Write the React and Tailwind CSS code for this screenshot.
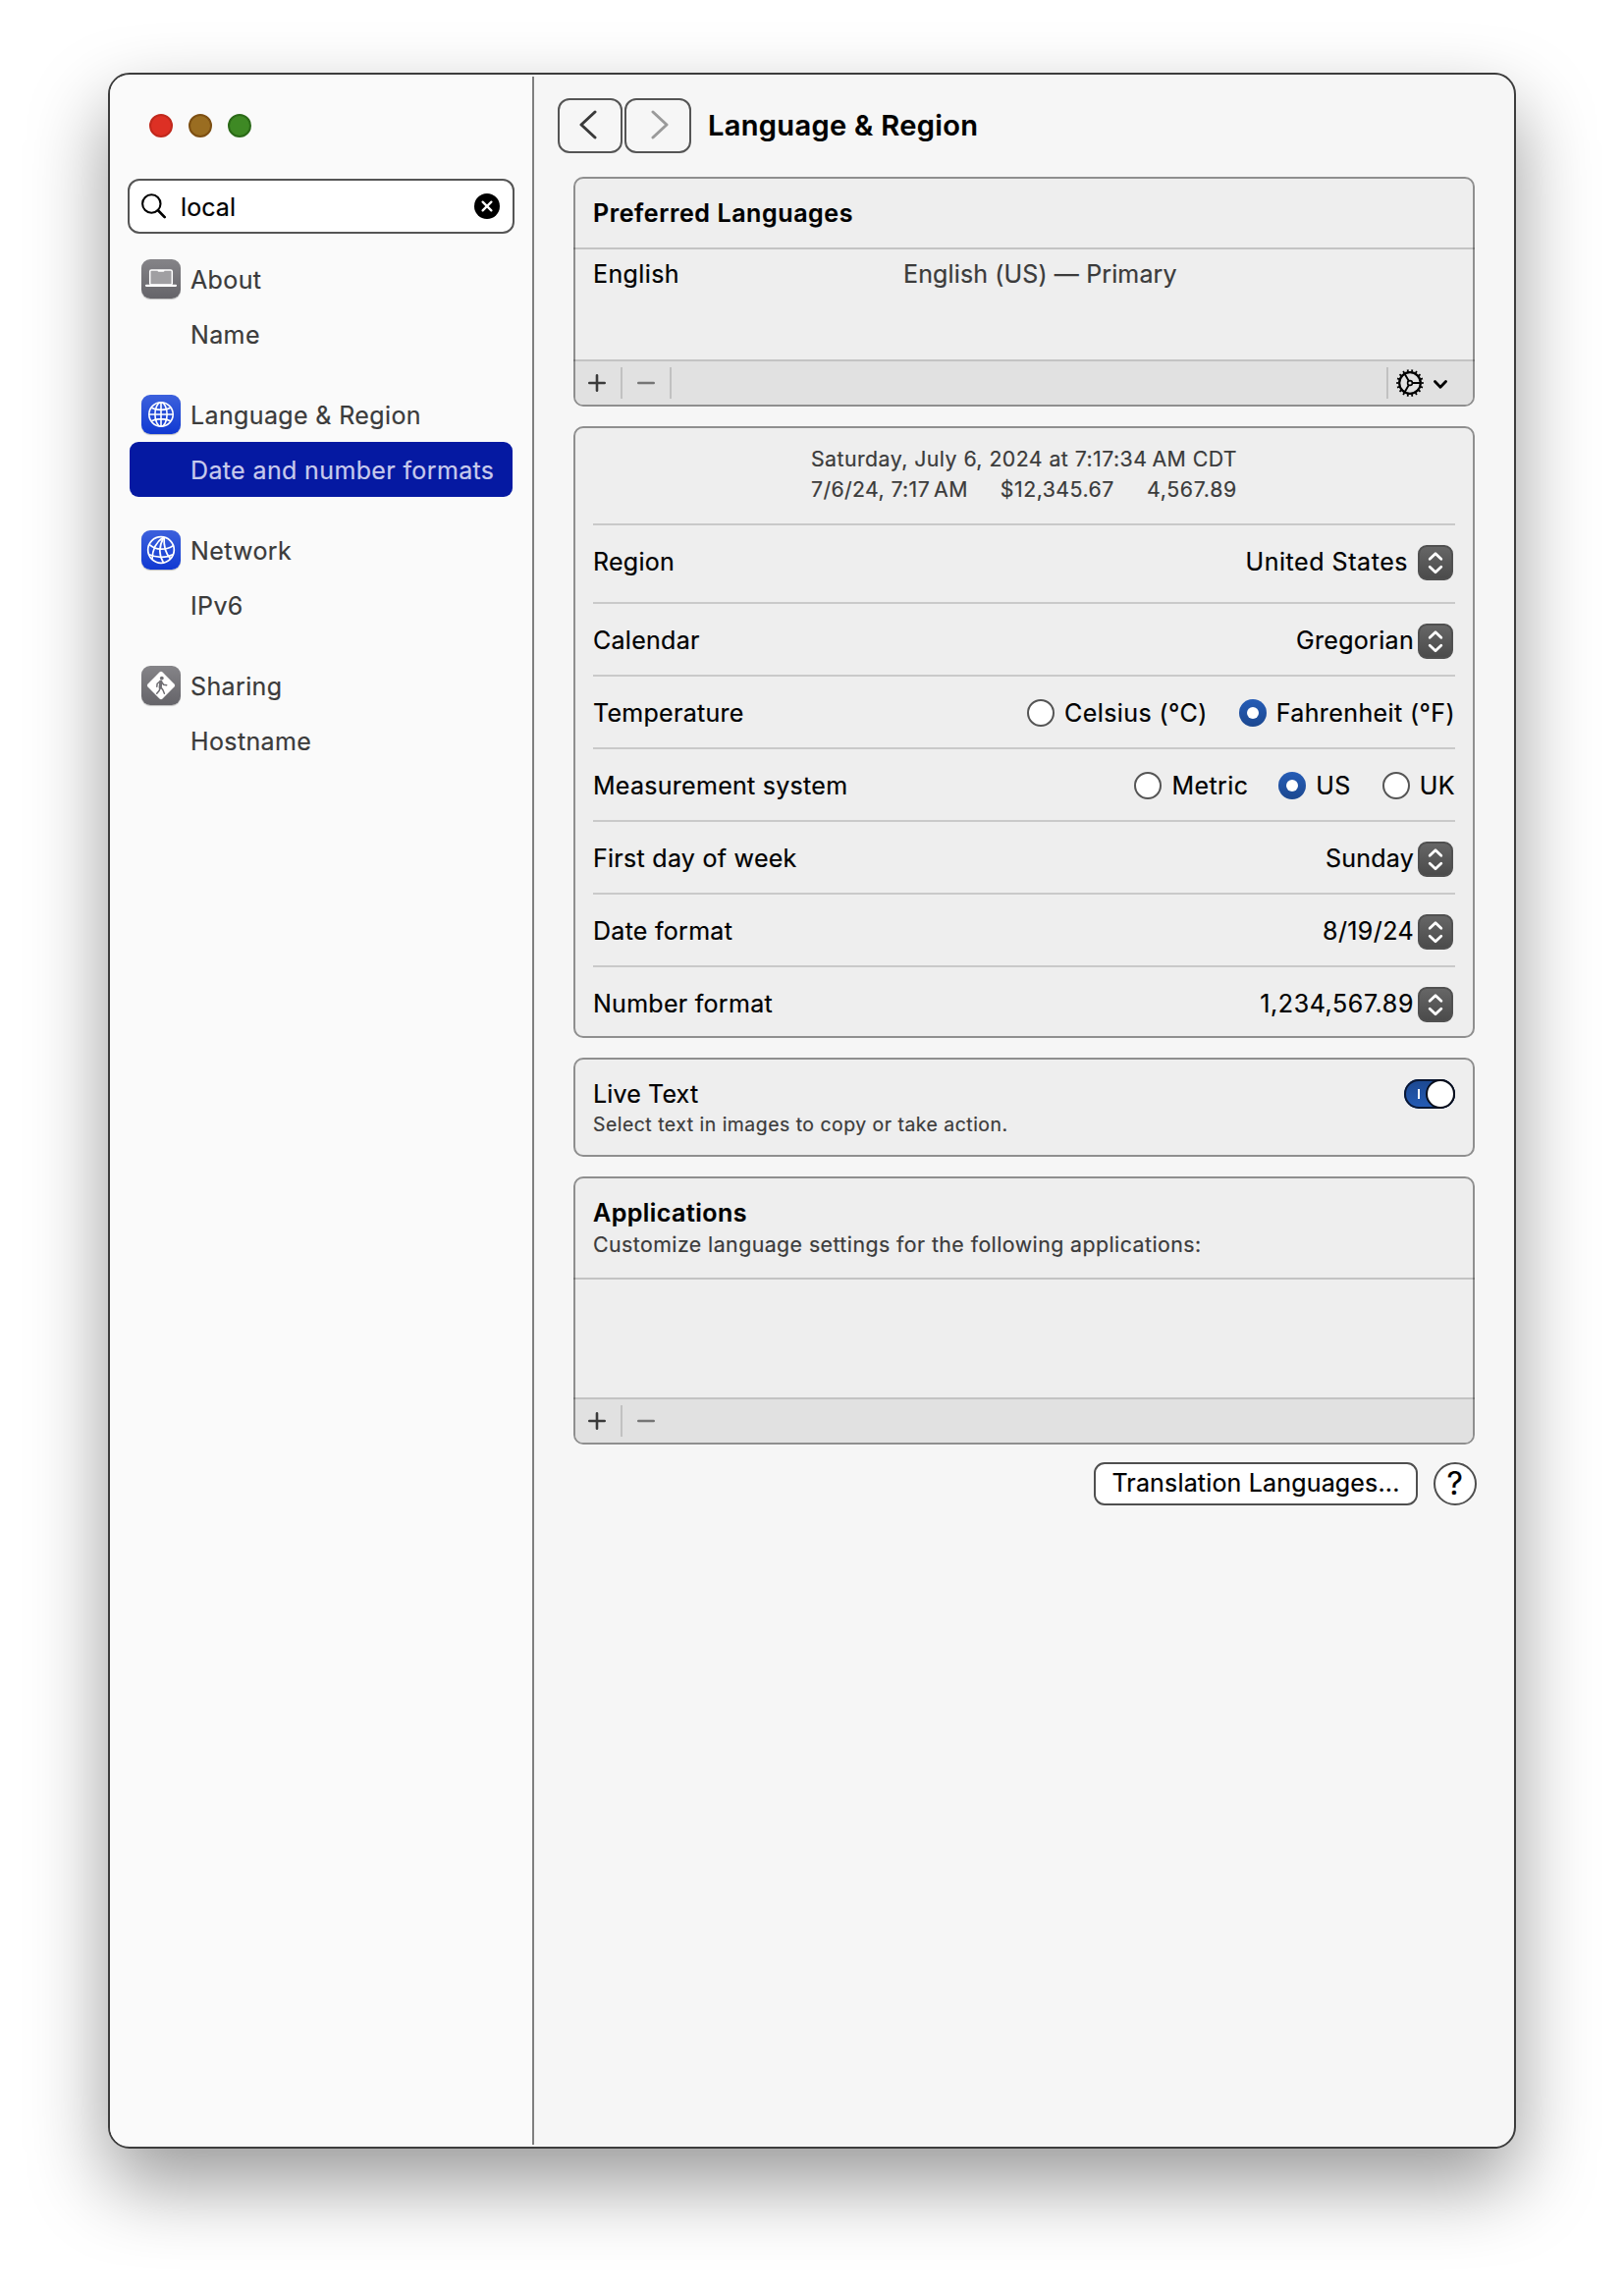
import clsx from 'clsx';

// Sidebar icons, all drawn on a 40x40 tile
const LaptopGlyph = () => (
  <svg viewBox="0 0 40 40" className="size-10" fill="none">
    <rect x="8.7" y="11" width="22.6" height="15" rx="1.6" fill="#a09fa2" stroke="white" strokeWidth="1.5" />
    <path d="M16.5 11h7v.6a1.2 1.2 0 0 1-1.2 1.2h-4.6a1.2 1.2 0 0 1-1.2-1.2z" fill="white" />
    <path d="M5 26.8h30" stroke="white" strokeWidth="2.2" strokeLinecap="round" />
  </svg>
);

const GlobeGlyph = () => (
  <svg viewBox="0 0 40 40" className="size-10" fill="none" stroke="white" strokeWidth="1.6">
    <circle cx="20" cy="20" r="12.2" />
    <ellipse cx="20" cy="20" rx="6.1" ry="12.2" />
    <path d="M20 7.8v24.4M7.8 20h24.4M10.2 13.2c5.6 2.9 14 2.9 19.6 0M10.2 26.8c5.6-2.9 14-2.9 19.6 0" />
  </svg>
);

const NetworkGlyph = () => (
  <svg viewBox="0 0 40 40" className="size-10" fill="none" stroke="white" strokeWidth="1.7">
    <circle cx="20" cy="20" r="13.3" />
    <path d="M22.5 7C15.5 11.5 11.2 19.5 11 29.6" />
    <path d="M22.8 7C18.2 15.5 17.5 25 22.5 33" />
    <path d="M23.2 7C22.6 15.5 24 23 29.6 28.8" />
    <path d="M8.3 14.6C14.5 20.5 25.5 20.6 32.3 15.6" />
    <path d="M7.4 24.6C15 28.3 25.5 28.2 32.6 24.4" />
  </svg>
);

const WalkGlyph = () => (
  <svg viewBox="0 0 40 40" className="size-10" fill="none">
    <rect x="9.4" y="9.4" width="21.2" height="21.2" rx="2.2" fill="white" transform="rotate(45 20 20)" />
    <circle cx="20.8" cy="12.6" r="1.9" fill="#6f6e73" />
    <path d="M19.8 16.2l-.6 6" stroke="#6f6e73" strokeWidth="3.2" strokeLinecap="round" />
    <path d="M18.8 16l-2.7 2.3-.3 3M21 17l1.7 2.2 3 .5M19 22.5l-.8 2.7-2.5 3M20 22l2 2.7 1.4 3.5" stroke="#6f6e73" strokeWidth="1.5" strokeLinecap="round" strokeLinejoin="round" />
  </svg>
);

const GearIcon = () => (
  <svg viewBox="0 0 28 28" className="size-7" fill="none" stroke="black">
    <circle cx="14" cy="14" r="10.8" strokeWidth="2.2" />
    <circle cx="14" cy="14" r="12.6" strokeWidth="2.4" pathLength="72" strokeDasharray="1.6 2.4" strokeDashoffset="0.8" />
    <circle cx="14" cy="14" r="2.4" strokeWidth="1.6" />
    <path d="M16.5 14H24M12.7 11.8L8.8 5M12.7 16.2L8.8 23" strokeWidth="1.9" />
  </svg>
);

const sections = [
  { title: 'About', item: 'Name', tile: 'from-[#858488] to-[#656469]', Glyph: LaptopGlyph },
  { title: 'Language & Region', item: 'Date and number formats', tile: 'from-[#3c60dc] to-[#1038d2]', Glyph: GlobeGlyph, selected: true },
  { title: 'Network', item: 'IPv6', tile: 'from-[#3c60dc] to-[#1038d2]', Glyph: NetworkGlyph },
  { title: 'Sharing', item: 'Hostname', tile: 'from-[#858488] to-[#656469]', Glyph: WalkGlyph },
];

const Sidebar = () => (
  <aside className="my-0.5 w-[432px] shrink-0 border-r-2 border-[#7f7f7f] bg-[#fafafa] px-[18px]">
    {/* Window buttons */}
    <div className="flex gap-4 pl-[22px] pt-[38px]">
      <span className="size-6 rounded-full border-2 border-[#c1281c] bg-[#dd3024]" />
      <span className="size-6 rounded-full border-2 border-[#7d4f12] bg-[#9a6d21]" />
      <span className="size-6 rounded-full border-2 border-[#2b6a18] bg-[#3e8924]" />
    </div>

    {/* Search */}
    <div className="mt-[42px] flex h-14 items-center rounded-[12px] border-2 border-[#555] bg-white pl-3 pr-[13px]">
      <svg viewBox="0 0 26 26" className="size-[26px]" fill="none" stroke="black" strokeLinecap="round">
        <circle cx="10.3" cy="10.5" r="9.2" strokeWidth="2.1" />
        <path d="M17 17.2l6.7 6.9" strokeWidth="2.7" />
      </svg>
      <span className="ml-[14px] mt-1 flex-1 tracking-[0.1px]">local</span>
      <svg viewBox="0 0 26 26" className="size-[26px]">
        <circle cx="13" cy="13" r="13" fill="black" />
        <path d="M8.6 8.6l8.8 8.8M17.4 8.6l-8.8 8.8" stroke="white" strokeWidth="2.3" strokeLinecap="round" />
      </svg>
    </div>

    {/* Results */}
    <nav className="mt-[18px] flex flex-col gap-[26px] px-0.5 leading-[58px] tracking-[0.37px] text-[#3b3b3b]">
      {sections.map(({ title, item, tile, Glyph, selected }) => (
        <div key={title}>
          <div className="flex h-14 gap-[10px] pl-3">
            <span className={clsx('mt-2 size-10 rounded-[9px] bg-linear-to-b shadow-[0_1px_1px_rgba(0,0,0,0.25)]', tile)}>
              <Glyph />
            </span>
            <span>{title}</span>
          </div>
          <div className={clsx('h-14 rounded-[9px] pl-[62px]', selected && 'bg-[#0519a2] text-[#c7caec]')}>{item}</div>
        </div>
      ))}
    </nav>
  </aside>
);

const Card = ({ className, children }) => (
  <section className={clsx('w-[918px] rounded-[10px] border-2 border-[#8f8f8f] bg-[#eee]', className)}>{children}</section>
);

const CardFooter = ({ children }) => (
  <div className="flex h-11 items-center rounded-b-[8px] bg-[#e1e1e1]">
    <svg viewBox="0 0 18 18" className="ml-[13px] size-[18px]" stroke="#3a3a3a" strokeWidth="2.6" strokeLinecap="round">
      <path d="M1.3 9h15.4M9 1.3v15.4" />
    </svg>
    <span className="ml-[15px] h-8 w-0.5 bg-[#c1c1c1]" />
    <svg viewBox="0 0 18 18" className="ml-[15px] size-[18px]" stroke="#757575" strokeWidth="2.6" strokeLinecap="round">
      <path d="M1.3 9h15.4" />
    </svg>
    {children}
  </div>
);

const Separator = () => <div className="-mx-0.5 h-0.5 bg-black/18" />;

const Row = ({ label, children, className }) => (
  <div className={clsx('flex h-[74px] items-start border-t-2 border-[#c9c9c9] pt-5', className)}>
    <span className="flex-1 leading-[34px] tracking-[0.28px]">{label}</span>
    {children}
  </div>
);

const Select = ({ value, className }) => (
  <div className="mr-0.5 flex">
    <span className={clsx('leading-[34px]', className || 'mr-1')}>{value}</span>
    <span className="size-9 rounded-[9px] border-2 border-[#505050] bg-linear-to-b from-[#666] to-[#4b4b4b]">
      <svg viewBox="0 0 32 32" className="size-8" fill="none" stroke="white" strokeWidth="2.8" strokeLinecap="round" strokeLinejoin="round">
        <path d="M10.2 12.2l5.8-5.5 5.8 5.5M10.2 20.2l5.8 5.5 5.8-5.5" />
      </svg>
    </span>
  </div>
);

const Radio = ({ label, checked, className }) => (
  <label className={clsx('flex leading-[34px]', className)}>
    {checked ? (
      <span className="mr-[10px] mt-[3px] flex size-7 items-center justify-center rounded-full bg-linear-to-b from-[#255cb6] to-[#1c4890]">
        <span className="size-3 rounded-full bg-white" />
      </span>
    ) : (
      <span className="mr-[10px] mt-[3px] size-7 rounded-full border-2 border-[#555] bg-white" />
    )}
    {label}
  </label>
);

const App = () => (
  <div className="h-[2334px] w-[1654px] overflow-hidden bg-white px-[110px] pt-[74px] font-[Inter,'Liberation_Sans',sans-serif] text-[25px] tracking-[0.4px] text-black [-webkit-text-stroke:0.2px]">
    <div className="flex h-[2114px] w-[1434px] overflow-hidden rounded-[22px] border-2 border-[#3c3c3c] bg-[#f6f6f6] shadow-[0_36px_80px_rgba(0,0,0,0.4)]">
      <Sidebar />

      <main className="flex-1">
        {/* Toolbar */}
        <header className="flex items-center gap-0.5 pl-6 pt-6">
          <button className="flex h-14 w-[66px] items-center justify-center rounded-[12px] border-2 border-[#555]">
            <svg viewBox="0 0 18 30" className="mb-0.5 mr-1 h-[30px] w-[18px]" fill="none" stroke="#3a3a3a" strokeWidth="3" strokeLinecap="round" strokeLinejoin="round">
              <path d="M16 2L2 15L16 28" />
            </svg>
          </button>
          <button className="flex h-14 w-[68px] items-center justify-center rounded-[12px] border-2 border-[#555]">
            <svg viewBox="0 0 18 30" className="mb-0.5 ml-1 h-[30px] w-[18px]" fill="none" stroke="#9a9a9a" strokeWidth="3" strokeLinecap="round" strokeLinejoin="round">
              <path d="M2 2L16 15L2 28" />
            </svg>
          </button>
          <h1 className="ml-[15px] text-[29px] font-semibold leading-[56px] tracking-[0.35px]">Language &amp; Region</h1>
        </header>

        <div className="flex flex-col gap-5 pl-10 pt-6">
          {/* Preferred languages */}
          <Card>
            <h2 className="pl-[18px] font-semibold leading-[70px] tracking-[0.6px]">Preferred Languages</h2>
            <Separator />
            <div className="flex h-28 pl-[18px] leading-[50px]">
              <span className="w-[316px]">English</span>
              <span className="tracking-[0.13px] text-[#3b3b3b]">English (US) — Primary</span>
            </div>
            <Separator />
            <CardFooter>
              <span className="ml-[15px] h-8 w-0.5 bg-[#c1c1c1]" />
              <span className="ml-auto mr-2 h-8 w-0.5 bg-[#c1c1c1]" />
              <GearIcon />
              <svg viewBox="0 0 14 9" className="ml-[10px] mr-[26px] mt-0.5 h-[9px] w-[14px]" fill="none" stroke="black" strokeWidth="2.8" strokeLinecap="round" strokeLinejoin="round">
                <path d="M1.5 1.6L7 7.2L12.5 1.6" />
              </svg>
            </CardFooter>
          </Card>

          {/* Formats */}
          <Card className="h-[623px] px-[18px]">
            <div className="flex h-[97px] justify-center whitespace-nowrap pt-4 text-[21.3px] leading-[31px] text-[#3b3b3b]">
              <div className="w-[434px]">
                <p className="tracking-[0.45px]">Saturday, July 6, 2024 at 7:17:34<span className="ml-[5px]">AM CDT</span></p>
                <div className="flex justify-between">
                  <span className="tracking-[0.37px]">7/6/24, 7:17<span className="ml-1">AM</span></span>
                  <span className="tracking-[0.5px]">$12,345.67</span>
                  <span className="tracking-[0.7px]">4,567.89</span>
                </div>
              </div>
            </div>
            <Row label="Region" className="h-[80px]">
              <Select value="United States" className="mr-[10px] tracking-[0.55px]" />
            </Row>
            <Row label="Calendar">
              <Select value="Gregorian" className="mr-1 tracking-[0.3px]" />
            </Row>
            <Row label="Temperature">
              <Radio label="Celsius (°C)" />
              <Radio label="Fahrenheit (°F)" checked className="ml-8" />
            </Row>
            <Row label="Measurement system">
              <Radio label="Metric" />
              <Radio label="US" checked className="ml-[31px]" />
              <Radio label="UK" className="ml-8" />
            </Row>
            <Row label="First day of week">
              <Select value="Sunday" className="mr-1 tracking-[0.25px]" />
            </Row>
            <Row label="Date format">
              <Select value="8/19/24" />
            </Row>
            <Row label="Number format">
              <Select value="1,234,567.89" className="mr-1 tracking-[0.6px]" />
            </Row>
          </Card>

          {/* Live Text */}
          <Card className="flex h-[101px] justify-between px-[18px]">
            <div className="pt-[18px]">
              <p className="leading-[34px] tracking-[0.15px]">Live Text</p>
              <p className="mt-px text-[19.4px] leading-[26px] tracking-[0.51px] text-[#3b3b3b]">Select text in images to copy or take action.</p>
            </div>
            <div className="mt-5 flex h-[30px] w-[52px] items-center justify-end rounded-full bg-linear-to-b from-[#1c4890] to-[#255cb6] shadow-[inset_0_0_0_2px_#0a1733]">
              <span className="mr-1.5 h-[10px] w-0.5 bg-white" />
              <span className="size-[30px] rounded-full border-2 border-[#0a0f1c] bg-white" />
            </div>
          </Card>

          {/* Applications */}
          <Card>
            <div className="h-[101px] pl-[18px] pt-[18px]">
              <h2 className="font-semibold leading-[34px] tracking-[0.47px]">Applications</h2>
              <p className="text-[21.3px] leading-[30px] tracking-[0.45px] text-[#3b3b3b]">
                Customize language settings for the following applications:
              </p>
            </div>
            <Separator />
            <div className="h-[120px]" />
            <Separator />
            <CardFooter />
          </Card>
        </div>

        <div className="mt-[18px] flex justify-end gap-4 pr-[38px]">
          <button className="flex h-11 w-[330px] justify-center rounded-[11px] border-2 border-[#4f4f4f] bg-white leading-[38px] tracking-[0.17px]">
            Translation Languages...
          </button>
          <button className="flex size-11 justify-center rounded-full border-2 border-[#4f4f4f] bg-white text-[32px] leading-10">?</button>
        </div>
      </main>
    </div>
  </div>
);

export default App;
